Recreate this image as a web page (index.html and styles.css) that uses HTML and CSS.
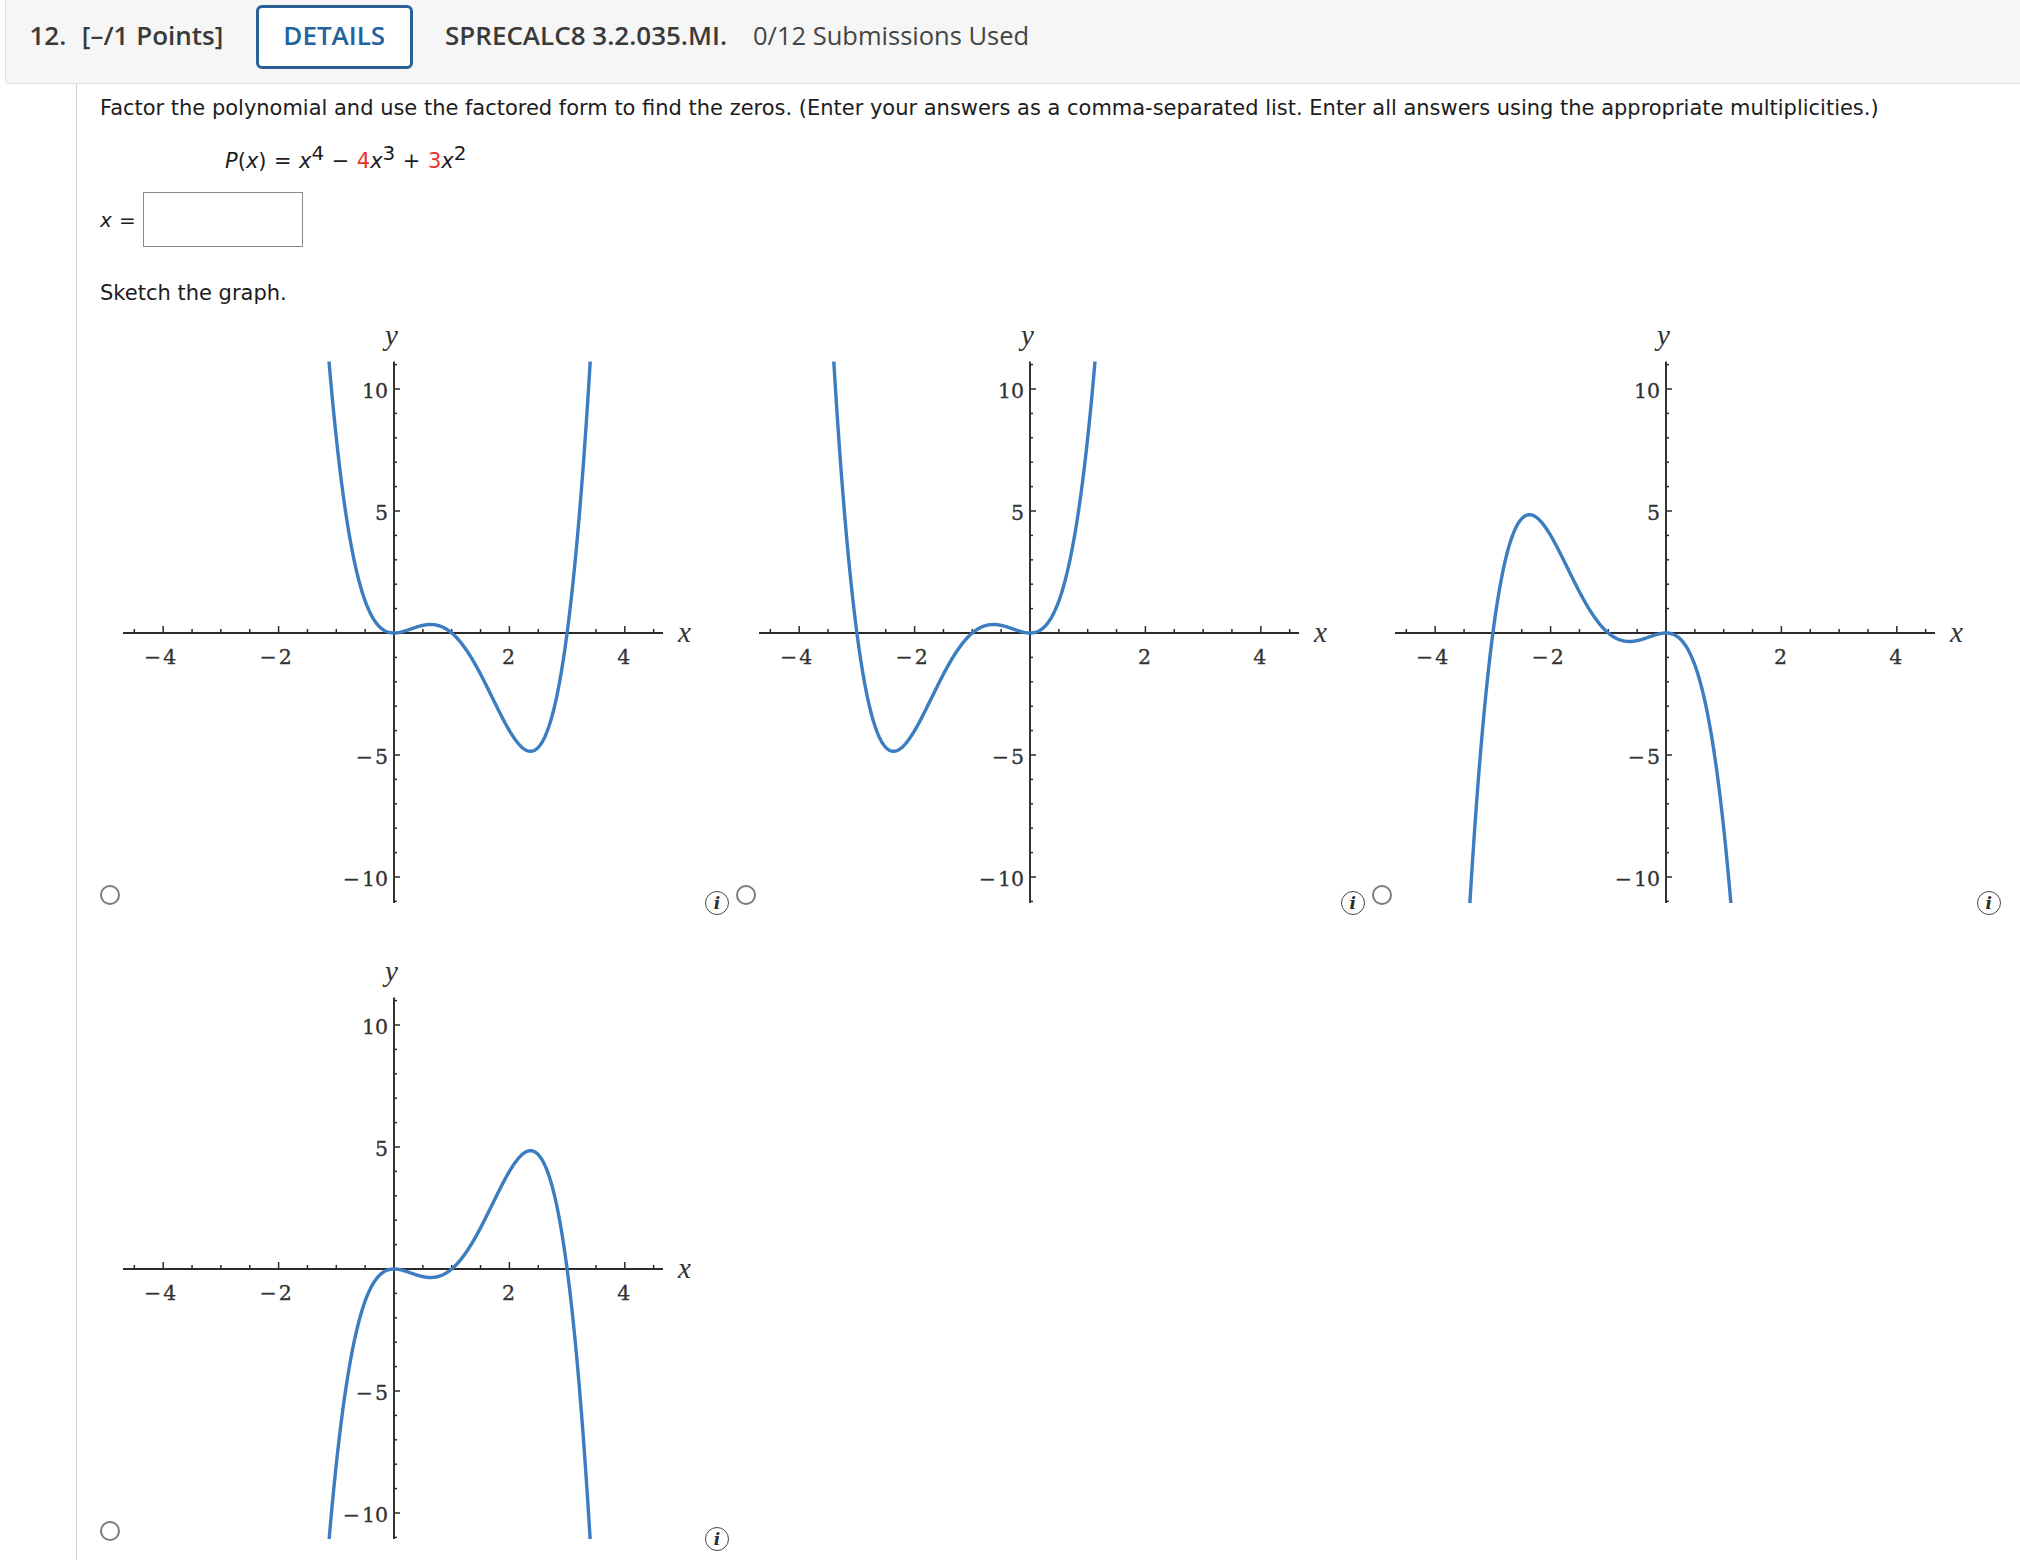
FILE: index.html
```html
<!DOCTYPE html>
<html lang="en">
<head>
<meta charset="utf-8">
<title>Question 12</title>
<link rel="stylesheet" href="styles.css">
</head>
<body>
<header class="qhead">
  <span class="qnum">12.&nbsp; [&ndash;/1 Points]</span>
  <button class="details">DETAILS</button>
  <span class="qcode">SPRECALC8 3.2.035.MI.</span>
  <span class="qsub">0/12 Submissions Used</span>
</header>
<main class="qbody">
  <p class="prompt">Factor the polynomial and use the factored form to find the zeros. (Enter your answers as a comma-separated list. Enter all answers using the appropriate multiplicities.)</p>
  <p class="formula"><i>P</i>(<i>x</i>) = <i>x</i><sup>4</sup> &minus; <span class="red">4</span><i>x</i><sup>3</sup> + <span class="red">3</span><i>x</i><sup>2</sup></p>
  <div class="answer"><i>x</i> = <input class="ans-input" type="text" aria-label="x"></div>
  <p class="sketch">Sketch the graph.</p>
  <div class="options" id="options"></div>
</main>
<script src="graphs.js"></script>
</body>
</html>
```

FILE: styles.css
```css
html, body { margin: 0; padding: 0; background: #fff; }
body { width: 2020px; height: 1560px; overflow: hidden; font-family: "DejaVu Sans", sans-serif; color: #1c1c1c; }
.qhead { box-sizing: border-box; height: 84px; margin-left: 5px; display: flex; align-items: center; background: #f6f6f6; border: 1px solid #e2e2e2; border-top: 0; border-right: 0; border-bottom-left-radius: 4px; padding: 0 0 13px 23.5px; font-family: "Open Sans", sans-serif; font-size: 26px; color: #3a3a3a; }
.qnum { font-weight: 600; width: 226px; word-spacing: 1px; }
.details { box-sizing: border-box; width: 157.5px; height: 64px; margin-top: 3px; background: #fff; border: 3px solid #2a6096; border-radius: 6px; font: 600 26px "Open Sans", sans-serif; color: #23629e; padding: 0 0 3px; }
.qcode { font-weight: 600; margin-left: 32px; }
.qsub { margin-left: 26px; font-size: 25.5px; color: #444; }
.qbody { box-sizing: border-box; height: 1476px; margin-left: 76px; border-left: 1px solid #d2d2d2; padding: 0 0 0 23px; }
.prompt { margin: 0; padding-top: 8px; font-size: 20.97px; line-height: 32px; white-space: nowrap; }
.formula { margin: 0; padding: 21px 0 0 125px; font-size: 21px; line-height: 32px; word-spacing: 0.8px; }
.formula sup { font-size: 20px; line-height: 0; }
.red { color: #e8332a; }
.answer { display: flex; align-items: center; gap: 7.2px; margin-top: 15px; font-size: 20px; }
.ans-input { box-sizing: border-box; width: 160px; height: 55px; border: 1px solid #8a8a8a; background: #fff; }
.sketch { margin: 30px 0 0; font-size: 21px; line-height: 32px; }
.options { display: grid; grid-template-columns: repeat(3, 635.85px); grid-auto-rows: 600px; row-gap: 35.6px; margin-top: 1px; }
.option { display: flex; align-items: flex-end; }
.radio { box-sizing: border-box; width: 20px; height: 20px; margin-bottom: 5px; border: 2px solid #7c7c7c; border-radius: 50%; background: #fff; flex: none; }
.graph { width: 585px; height: 600px; flex: none; display: block; }
.info { box-sizing: border-box; width: 24px; height: 24px; margin-bottom: -5px; border: 1px solid #444; border-radius: 50%; flex: none; display: flex; align-items: center; justify-content: center; font: italic 700 17px "DejaVu Serif", serif; color: #2c2c2c; }
.axis { stroke: #2a2a2a; stroke-width: 1.9; fill: none; }
.tick { stroke: #2a2a2a; stroke-width: 1.5; }
.curve { stroke: #3b7dc0; stroke-width: 3.4; fill: none; }
.lab { font-family: "DejaVu Serif", serif; font-size: 20.5px; fill: #333; stroke: #333; stroke-width: 0.3; }
.var { font-family: "Liberation Serif", serif; font-style: italic; font-size: 29px; fill: #333; }
```

FILE: graphs.js
```js
var NS = "http://www.w3.org/2000/svg";
var UX = 57.7, UY = 24.4, OX = 274, OY = 323;
var XMIN = -271, XMAX = 269, YTOP = -271.5, YBOT = 270;
function el(parent, name, attrs, text) {
  var e = document.createElementNS(NS, name);
  for (var k in attrs) e.setAttribute(k, attrs[k]);
  if (text) e.textContent = text;
  parent.appendChild(e);
  return e;
}
function P(x) { return x * x * x * x - 4 * x * x * x + 3 * x * x; }
function build(sx, sy) {
  var svg = document.createElementNS(NS, "svg");
  svg.setAttribute("class", "graph");
  svg.setAttribute("viewBox", "0 0 585 600");
  var clip = el(svg, "clipPath", { id: "c" + sx + "_" + sy });
  el(clip, "rect", { x: 0, y: OY + YTOP, width: 585, height: YBOT - YTOP });
  el(svg, "line", { "class": "axis", x1: OX + XMIN, x2: OX + XMAX, y1: OY, y2: OY });
  el(svg, "line", { "class": "axis", x1: OX, x2: OX, y1: OY + YTOP, y2: OY + YBOT });
  var i, px, py;
  for (i = -9; i <= 9; i++) {
    if (i === 0) continue;
    px = OX + i * UX / 2;
    var major = i % 4 === 0;
    el(svg, "line", { "class": "tick", x1: px, x2: px, y1: OY, y2: OY - (major ? 7 : 4) });
  }
  for (i = -11; i <= 11; i++) {
    if (i === 0) continue;
    py = OY - i * UY;
    var maj = i % 5 === 0;
    el(svg, "line", { "class": "tick", x1: OX, x2: OX + (maj ? 6 : 3), y1: py, y2: py });
  }
  var d = "", first = true;
  for (var x = -4.6; x <= 4.6; x += 0.01) {
    var v = sy * P(sx * x);
    if (Math.abs(v) > 12) { first = true; continue; }
    d += (first ? "M" : "L") + (OX + x * UX).toFixed(2) + " " + (OY - v * UY).toFixed(2);
    first = false;
  }
  el(svg, "path", { "class": "curve", d: d, "clip-path": "url(#c" + sx + "_" + sy + ")" });
  [-4, -2, 2, 4].forEach(function (n) {
    var t = n < 0 ? "\u2212\u200a" + (-n) : "" + n;
    el(svg, "text", { "class": "lab", x: OX + n * UX + (n < 0 ? -3 : -1), y: OY + 31, "text-anchor": "middle" }, t);
  });
  [10, 5, -5, -10].forEach(function (n) {
    var t = n < 0 ? "\u2212\u200a" + (-n) : "" + n;
    el(svg, "text", { "class": "lab", x: OX - 6, y: OY - n * UY + 9, "text-anchor": "end" }, t);
  });
  el(svg, "text", { "class": "var", x: OX - 9, y: OY - 288 }, "y");
  el(svg, "text", { "class": "var", x: OX + 284, y: OY + 9 }, "x");
  return svg;
}
var host = document.getElementById("options");
[[1, 1], [-1, 1], [-1, -1], [1, -1]].forEach(function (s) {
  var o = document.createElement("div");
  o.className = "option";
  var r = document.createElement("span");
  r.className = "radio";
  o.appendChild(r);
  o.appendChild(build(s[0], s[1]));
  var inf = document.createElement("span");
  inf.className = "info";
  inf.textContent = "i";
  o.appendChild(inf);
  host.appendChild(o);
});
```
